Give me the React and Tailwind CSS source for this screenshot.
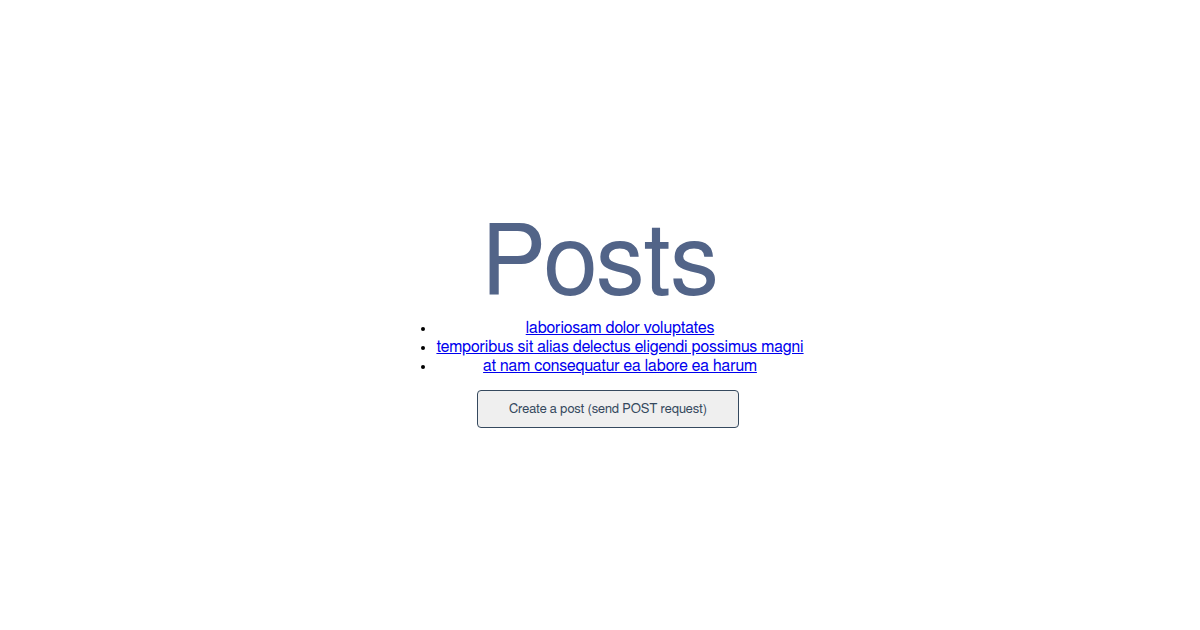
const posts = [
  { id: 1, title: "laboriosam dolor voluptates" },
  { id: 2, title: "temporibus sit alias delectus eligendi possimus magni" },
  { id: 3, title: "at nam consequatur ea labore ea harum" },
];

export default function App() {
  return (
    <div className="flex min-h-screen items-center justify-center bg-white font-[FreeSans,'Liberation_Sans',Arial,sans-serif] text-black">
      <main className="text-center">
        <h1 className="pt-[10px] text-[98px] leading-[107px] font-light text-[#526488]">Posts</h1>
        <ul className="mb-[14px] list-disc pl-10 text-base leading-[19px]">
          {posts.map((post) => (
            <li key={post.id}>
              <a href={`#post-${post.id}`} className="text-[#0000ee] underline">
                {post.title}
              </a>
            </li>
          ))}
        </ul>
        <button
          type="button"
          className="ml-4 rounded border border-[#35495e] bg-[#efefef] px-[31px] pt-[11px] pb-[9px] text-[13px] leading-4 text-[#35495e]"
        >
          Create a post (send POST request)
        </button>
      </main>
    </div>
  );
}
